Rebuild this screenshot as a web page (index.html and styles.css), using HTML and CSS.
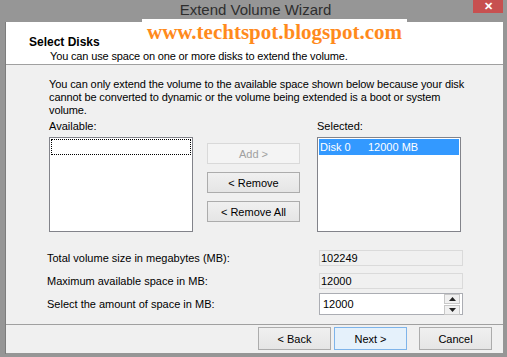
FILE: index.html
```html
<!DOCTYPE html>
<html lang="en">
<head>
    <meta charset="UTF-8">
    <title>Extend Volume Wizard</title>
    <link rel="stylesheet" href="styles.css">
</head>
<body>

<div class="window">
    <div class="titlebar">
        <span></span>
        <span class="title">Extend Volume Wizard</span>
        <span class="close-cell"><span class="close">&#x2715;</span></span>
    </div>

    <div class="panel">
        <div class="watermark">www.techtspot.blogspot.com</div>

        <div class="header">
            <h1>Select Disks</h1>
            <p>You can use space on one or more disks to extend the volume.</p>
        </div>

        <div class="content">
            <p class="intro">You can only extend the volume to the available space shown below because your disk cannot be converted to dynamic or the volume being extended is a boot or system volume.</p>

            <div class="picker">
                <div class="col">
                    <label>Available:</label>
                    <div class="listbox">
                        <div class="focus-row"></div>
                    </div>
                </div>
                <div class="actions">
                    <button class="btn" disabled>Add &gt;</button>
                    <button class="btn">&lt; Remove</button>
                    <button class="btn">&lt; Remove All</button>
                </div>
                <div class="col">
                    <label>Selected:</label>
                    <div class="listbox">
                        <div class="item selected"><span class="disk">Disk 0</span><span>12000 MB</span></div>
                    </div>
                </div>
            </div>

            <div class="fields">
                <div class="row row-total">
                    <span>Total volume size in megabytes (MB):</span>
                    <div class="readonly">102249</div>
                </div>
                <div class="row row-max">
                    <span>Maximum available space in MB:</span>
                    <div class="readonly">12000</div>
                </div>
                <div class="row row-select">
                    <span>Select the amount of space in MB:</span>
                    <div class="spin">
                        <span class="spin-value">12000</span>
                        <span class="spin-buttons">
                            <span class="spin-btn"><svg width="7" height="4" viewBox="0 0 7 4"><path d="M3.5 0 L7 4 L0 4 Z" fill="#222"/></svg></span>
                            <span class="spin-btn"><svg width="7" height="4" viewBox="0 0 7 4"><path d="M0 0 L7 0 L3.5 4 Z" fill="#222"/></svg></span>
                        </span>
                    </div>
                </div>
            </div>
        </div>

        <div class="footer">
            <button class="btn btn-wide">&lt; Back</button>
            <button class="btn btn-wide btn-default">Next &gt;</button>
            <button class="btn btn-wide btn-cancel">Cancel</button>
        </div>
    </div>
</div>

</body>
</html>
```

FILE: styles.css
```css
/* Ventana del asistente */
body {
    margin: 0;
    background-color: #969696;
    font-family: 'Liberation Sans', Arial, sans-serif;
    font-size: 11px;
    color: #000;
    width: 507px;
    height: 357px;
    overflow: hidden;
}
.window {
    display: flex;
    flex-direction: column;
    height: 357px;
}
.titlebar {
    height: 22px;
    display: grid;
    grid-template-columns: 1fr auto 1fr;
    align-items: start;
}
.title {
    font-size: 15px;
    color: #2e2e2e;
    line-height: 20px;
    padding-left: 4px;
}
.close-cell {
    display: flex;
    justify-content: flex-end;
    padding-right: 4px;
}
.close {
    width: 30px;
    height: 13px;
    background-color: #c75050;
    color: #fff;
    font-size: 11px;
    font-weight: bold;
    line-height: 12px;
    text-align: center;
}
.panel {
    position: relative;
    margin: 0 4px 0 5px;
    border-left: 1px solid #7d7d7d;
    height: 332px;
    display: flex;
    flex-direction: column;
}
.watermark {
    position: absolute;
    left: 136px;
    top: -3px;
    width: 265px;
    height: 28px;
    background: #fff;
    font-family: 'Liberation Serif', 'Times New Roman', serif;
    font-weight: bold;
    font-size: 21px;
    color: #ff8a1c;
    text-align: center;
    line-height: 26px;
}
.header {
    background: #fff;
    height: 43px;
    border-bottom: 1px solid #a0a0a0;
    padding-left: 23px;
    box-sizing: border-box;
}
.header h1 {
    margin: 0;
    padding-top: 13px;
    font-size: 12px;
    font-weight: bold;
    line-height: 14px;
}
.header p {
    margin: 0;
    padding-left: 21px;
    line-height: 14px;
    letter-spacing: -0.15px;
}
.content {
    background: #f0f0f0;
    height: 260px;
    border-bottom: 1px solid #a0a0a0;
    padding: 13px 0 0 43px;
    box-sizing: border-box;
}
.intro {
    margin: 0;
    width: 430px;
    line-height: 13px;
    letter-spacing: -0.1px;
}
.picker {
    display: flex;
    margin-top: 3px;
}
.col label {
    display: block;
    line-height: 13px;
    height: 17px;
}
.listbox {
    width: 144px;
    height: 95px;
    box-sizing: border-box;
    border: 1px solid #82838a;
    background: #fff;
    padding: 1px;
}
.focus-row {
    height: 16px;
    border: 1px dotted #000;
    box-sizing: border-box;
}
.item {
    height: 16px;
    line-height: 16px;
    padding-left: 1px;
    display: flex;
}
.item.selected {
    background: #3399ff;
    color: #fff;
}
.disk {
    width: 48px;
}
.actions {
    display: flex;
    flex-direction: column;
    gap: 8px;
    margin: 23px 17px 0 14px;
}
.btn {
    font-family: 'Liberation Sans', Arial, sans-serif;
    font-size: 11px;
    width: 93px;
    height: 21px;
    padding: 0;
    border: 1px solid #acacac;
    background: linear-gradient(#f0f0f0, #e5e5e5);
    color: #000;
}
.btn:disabled {
    border-color: #d9d9d9;
    background: #f4f4f4;
    color: #a0a0a0;
}
.fields {
    margin-top: 17px;
    display: flex;
    flex-direction: column;
    margin-left: -2px;
}
.row {
    display: flex;
    justify-content: space-between;
    align-items: center;
    width: 416px;
}
.row-total {
    height: 17px;
}
.row-max {
    height: 17px;
    margin-top: 6px;
}
.row-select {
    height: 22px;
    margin-top: 4px;
}
.readonly {
    width: 144px;
    height: 16px;
    box-sizing: border-box;
    border: 1px solid #dadada;
    background: #f0f0f0;
    line-height: 14px;
    padding-left: 1px;
}
.spin {
    width: 144px;
    height: 22px;
    box-sizing: border-box;
    border: 1px solid #abadb3;
    background: #fff;
    display: flex;
    justify-content: space-between;
    align-items: center;
    padding: 0 2px 0 3px;
}
.spin-buttons {
    display: flex;
    flex-direction: column;
    gap: 1px;
}
.spin-btn {
    width: 14px;
    height: 8px;
    border: 1px solid #c8c8c8;
    background: #f0f0f0;
    display: flex;
    justify-content: center;
    align-items: center;
}
.footer {
    background: #f0f0f0;
    height: 28px;
    display: flex;
    justify-content: flex-end;
    align-items: flex-start;
    padding: 2px 11px 0 0;
    box-sizing: border-box;
    gap: 3px;
}
.btn-wide {
    width: 73px;
    height: 23px;
}
.btn-default {
    border-color: #7eb4ea;
    background: #e5f1fb;
}
.btn-cancel {
    margin-left: 9px;
}
```
